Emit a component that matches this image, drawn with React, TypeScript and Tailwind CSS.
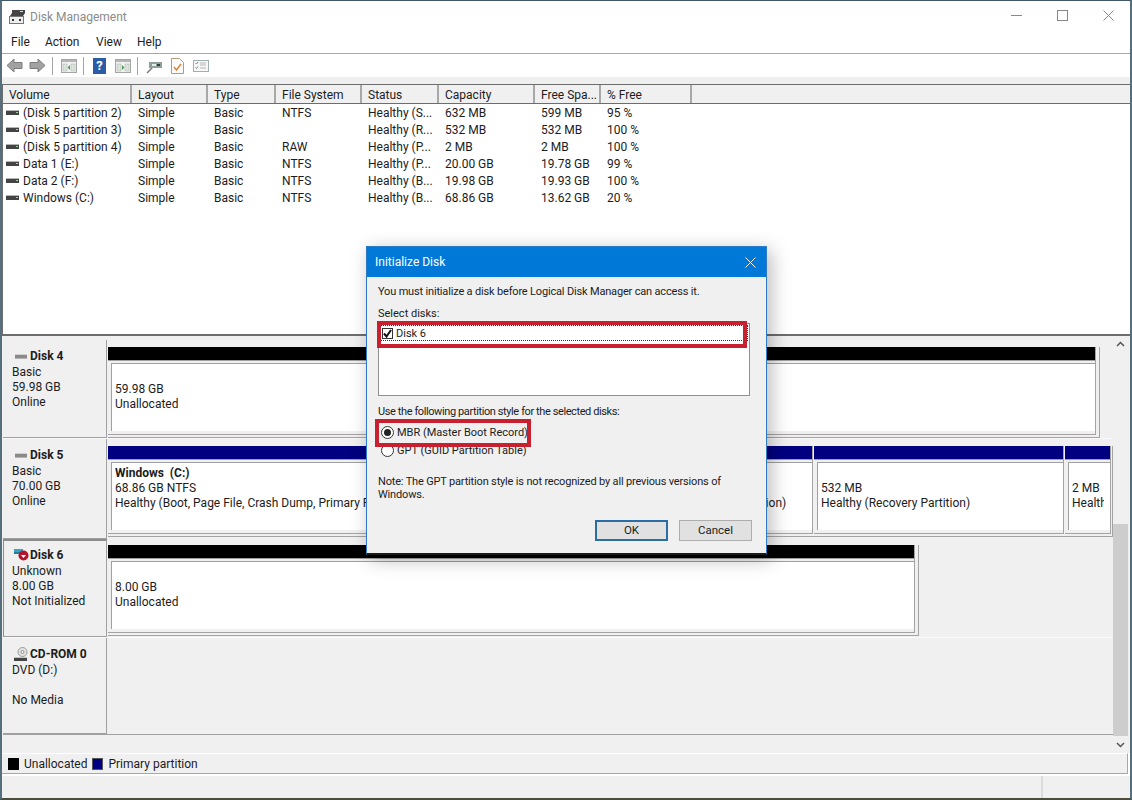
import type { ReactNode } from 'react';

type VolumeRow = {
  name: string;
  fs: string;
  status: string;
  capacity: string;
  free: string;
  pct: string;
};

const columns = [
  { label: 'Volume', width: 'w-[129px]' },
  { label: 'Layout', width: 'w-[76px]' },
  { label: 'Type', width: 'w-[68px]' },
  { label: 'File System', width: 'w-[86px]' },
  { label: 'Status', width: 'w-[77px]' },
  { label: 'Capacity', width: 'w-[96px]' },
  { label: 'Free Spa...', width: 'w-[66px]' },
  { label: '% Free', width: 'w-[91px]' },
];

const volumes: VolumeRow[] = [
  { name: '(Disk 5 partition 2)', fs: 'NTFS', status: 'Healthy (S...', capacity: '632 MB', free: '599 MB', pct: '95 %' },
  { name: '(Disk 5 partition 3)', fs: '', status: 'Healthy (R...', capacity: '532 MB', free: '532 MB', pct: '100 %' },
  { name: '(Disk 5 partition 4)', fs: 'RAW', status: 'Healthy (P...', capacity: '2 MB', free: '2 MB', pct: '100 %' },
  { name: 'Data 1 (E:)', fs: 'NTFS', status: 'Healthy (P...', capacity: '20.00 GB', free: '19.78 GB', pct: '99 %' },
  { name: 'Data 2 (F:)', fs: 'NTFS', status: 'Healthy (B...', capacity: '19.98 GB', free: '19.93 GB', pct: '100 %' },
  { name: 'Windows (C:)', fs: 'NTFS', status: 'Healthy (B...', capacity: '68.86 GB', free: '13.62 GB', pct: '20 %' },
];

function VolumeIcon() {
  return (
    <svg width="13" height="5" viewBox="0 0 13 5" className="shrink-0">
      <rect x="0" y="0" width="13" height="1" fill="#b5b5b5" />
      <rect x="0" y="1" width="13" height="4" fill="#444" />
      <rect x="10" y="2" width="2" height="1" fill="#9fd09f" />
    </svg>
  );
}

function DiskIcon() {
  return (
    <svg width="12" height="5" viewBox="0 0 12 5" className="shrink-0">
      <rect x="0" y="0" width="12" height="1" fill="#d0d0d0" />
      <rect x="0" y="1" width="12" height="3" fill="#8a8a8a" />
      <rect x="0" y="4" width="12" height="1" fill="#b5b5b5" />
    </svg>
  );
}

function UnknownDiskIcon() {
  return (
    <svg width="15" height="12" viewBox="0 0 15 12" className="shrink-0">
      <rect x="0" y="0" width="9" height="3" fill="#35a3c4" />
      <rect x="0" y="3" width="6" height="2" fill="#2a7d96" />
      <circle cx="9.500" cy="6.500" r="5" fill="#b3152c" />
      <path d="M7 6h5L9.500 9z" fill="#fff" />
    </svg>
  );
}

function CdIcon() {
  return (
    <svg width="15" height="15" viewBox="0 0 15 15" className="shrink-0">
      <circle cx="8.500" cy="5" r="4.500" fill="#e4e4e4" stroke="#9a9a9a" />
      <circle cx="8.500" cy="5" r="1.500" fill="#fff" stroke="#8a8a8a" />
      <rect x="0" y="10" width="13" height="1" fill="#c5c5c5" />
      <rect x="0" y="11" width="13" height="3" fill="#444" />
    </svg>
  );
}

function TitleIcon() {
  return (
    <svg width="16" height="14" viewBox="0 0 16 14" className="shrink-0">
      <path d="M3 0h13v3l-2 3H1l2-3z" fill="#444" />
      <rect x="11" y="1" width="3" height="1" fill="#ddd" />
      <rect x="0" y="6" width="15" height="8" fill="#777" />
      <rect x="1" y="7" width="13" height="6" fill="#eee" />
      <rect x="3" y="9" width="2" height="2" fill="#333" />
      <rect x="10" y="9" width="2" height="2" fill="#333" />
    </svg>
  );
}

function ArrowIcon({ flip }: { flip?: boolean }) {
  return (
    <svg width="17" height="15" viewBox="0 0 17 15" className={flip ? 'shrink-0 -scale-x-100' : 'shrink-0'}>
      <path d="M1 7.500 8 1v3.500h8v6H8V14z" fill="#a2a2a2" stroke="#7d7d7d" />
    </svg>
  );
}

function PaneIcon({ right }: { right?: boolean }) {
  return (
    <svg width="16" height="14" viewBox="0 0 16 14" className="shrink-0">
      <rect x="0.5" y="0.5" width="15" height="13" fill="#f4f4f4" stroke="#a5a5a5" />
      <rect x="1" y="1" width="14" height="2" fill="#b5b5b5" />
      <rect x="2" y="5" width="4" height="7" fill="#dbe4dc" stroke="#a8b0a8" strokeWidth="0.5" />
      <rect x="10" y="5" width="4" height="7" fill="#dbe4dc" stroke="#a8b0a8" strokeWidth="0.5" />
      <path d={right ? 'M7 6v5l2.500-2.500z' : 'M9 6v5L6.500 8.500z'} fill="#4f9a5a" />
    </svg>
  );
}

function HelpIcon() {
  return (
    <div className="flex h-[16px] w-[13px] shrink-0 items-center justify-center bg-[#2b5ca8] text-[13px] font-bold leading-none text-white">
      ?
    </div>
  );
}

function ConnectIcon() {
  return (
    <svg width="16" height="16" viewBox="0 0 16 16" className="shrink-0">
      <path d="M1 15 6 10" stroke="#777" strokeWidth="1.500" />
      <rect x="3" y="4" width="13" height="6" fill="#8fa09a" />
      <rect x="6" y="6" width="4" height="2" fill="#e6f0ea" />
      <rect x="11" y="6" width="3" height="2" fill="#2f3f3a" />
    </svg>
  );
}

function TaskIcon() {
  return (
    <svg width="13" height="16" viewBox="0 0 13 16" className="shrink-0">
      <path d="M.5.500h8l4 4v11H.5z" fill="#fbfbfb" stroke="#b59a78" />
      <path d="M3 9l2.500 3L10 6" fill="none" stroke="#d9863a" strokeWidth="1.500" />
    </svg>
  );
}

function ListIcon() {
  return (
    <svg width="16" height="12" viewBox="0 0 16 12" className="shrink-0">
      <rect x="0.5" y="0.5" width="15" height="11" fill="#f7f7f7" stroke="#9fb0b0" />
      <path d="M2.500 3l1 1 1.500-2M2.500 7.500l1 1 1.500-2" fill="none" stroke="#5f8f8f" />
      <path d="M7 3h6M7 5h6M7 8h6" stroke="#b5b5b5" />
    </svg>
  );
}

function Sep() {
  return <div className="h-[18px] w-px shrink-0 bg-[#a5a5a5]" />;
}

function DiskLabel({ icon, title, lines, active }: { icon: ReactNode; title: string; lines: string[]; active?: boolean }) {
  return (
    <div
      className={`flex h-full w-[104px] shrink-0 flex-col border-r border-b border-[#a0a0a0] bg-[#f0f0f0] text-[12px] leading-[15px] text-[#1c1c1c] ${
        active ? 'border-t-2 border-l border-t-[#8c8c8c] border-l-[#8c8c8c] pl-[8px] pt-[7px]' : 'pl-[9px] pt-[9px]'
      }`}
    >
      <div className="flex h-[16px] items-center pb-[2px] font-bold">
        <span className="flex w-[18px] justify-center">{icon}</span>
        {title}
      </div>
      {lines.map((l, i) => (
        <div key={i} className="h-[15px]">{l}</div>
      ))}
    </div>
  );
}

function Partition({ bar, width, children }: { bar: string; width: string; children: ReactNode }) {
  return (
    <div className={`flex h-full shrink-0 flex-col border-r border-b border-[#a3a3a3] ${width}`}>
      <div className={`h-[14px] shrink-0 border-b border-[#a0a0a0] ${bar}`} />
      <div className="mt-[2px] ml-[3px] mb-[3px] flex min-h-0 flex-1 flex-col border-t border-l border-[#a0a0a0] bg-white pl-[3px] pr-[6px] pt-[3px] text-[12px] leading-[15px] text-[#1c1c1c]">
        <div className="overflow-hidden whitespace-nowrap">{children}</div>
      </div>
    </div>
  );
}

function DiskFrame({ width, children }: { width: string; children: ReactNode }) {
  return (
    <div className={`flex h-[91px] gap-[1px] border-r border-b border-[#a3a3a3] pr-[3px] pb-[2px] ${width}`}>
      {children}
    </div>
  );
}

function InitDialog() {
  return (
    <div className="absolute left-[364px] top-[245px] z-10 flex w-[401px] flex-col border border-[#2b7cc4] border-b-[2px] border-b-[#1a1a1a] bg-[#f0f0f0] font-['Roboto',sans-serif] shadow-[4px_4px_18px_rgba(0,0,0,0.28)]">
      <div className="flex h-[30px] items-center justify-between bg-[#0078d7] pl-[8px] pr-[10px] text-[12px] text-white">
        <span>Initialize Disk</span>
        <svg width="11" height="11" viewBox="0 0 11 11">
          <path d="M.5.500l10 10M10.500.500l-10 10" stroke="#fff" strokeWidth="1" />
        </svg>
      </div>
      <div className="relative flex flex-col px-[11px] pt-[7px] pb-[12px] text-[11px] leading-[15px] text-[#1c1c1c]">
        <div className="tracking-[-0.17px]">You must initialize a disk before Logical Disk Manager can access it.</div>
        <div className="mt-[7px]">Select disks:</div>
        <div className="mr-[5px] mt-[2px] h-[73px] border border-[#8f8f8f] bg-white p-[1px]">
          <div className="flex h-[16px] items-center gap-[3px] border border-dotted border-[#333] pl-[1px]">
            <div className="flex h-[11px] w-[11px] items-center justify-center border border-[#333] bg-white">
              <svg width="9" height="9" viewBox="0 0 9 9">
                <path d="M1 4.500 3.500 7.500 8 1" fill="none" stroke="#111" strokeWidth="2" />
              </svg>
            </div>
            <span>Disk 6</span>
          </div>
        </div>
        <div className="mt-[8px] tracking-[-0.4px]">Use the following partition style for the selected disks:</div>
        <div className="mt-[5px] flex h-[17px] items-center gap-[3px] pl-[3px]">
          <div className="flex h-[13px] w-[13px] items-center justify-center rounded-full border border-[#333] bg-white">
            <div className="h-[7px] w-[7px] rounded-full bg-[#222]" />
          </div>
          <span>MBR (Master Boot Record)</span>
        </div>
        <div className="mt-[1px] flex h-[17px] items-center gap-[3px] pl-[3px]">
          <div className="h-[13px] w-[13px] rounded-full border border-[#333] bg-white" />
          <span>GPT (GUID Partition Table)</span>
        </div>
        <div className="mt-[16px] w-[350px] leading-[13px] tracking-[-0.17px]">Note: The GPT partition style is not recognized by all previous versions of Windows.</div>
        <div className="mt-[19px] flex justify-end gap-[11px] pr-[3px]">
          <button className="h-[21px] w-[73px] border-2 border-[#2a6ea5] bg-[#e1e1e1] text-[11.5px] leading-none">OK</button>
          <button className="h-[21px] w-[73px] border border-[#adadad] bg-[#e1e1e1] text-[11.5px] leading-none">Cancel</button>
        </div>
        {/* red annotation boxes sit on top of the form */}
        <div className="absolute left-[10px] top-[44px] h-[27px] w-[370px] border-4 border-[#c8202f]" />
        <div className="absolute left-[8px] top-[142px] h-[28px] w-[156px] border-4 border-[#c8202f]" />
      </div>
    </div>
  );
}

export default function App() {
  return (
    <div className="relative flex h-[800px] w-[1132px] flex-col overflow-hidden border-x-2 border-t border-b-2 border-x-[#566f7c] border-t-[#3f5968] border-b-[#4c4c3c] bg-white font-['Roboto',sans-serif] text-[12px] text-[#1c1c1c]">
      {/* title bar */}
      <div className="flex h-[31px] shrink-0 items-center pl-[7px] text-[#8b8b8b]">
        <TitleIcon />
        <span className="ml-[5px]">Disk Management</span>
        <div className="mb-[2px] ml-auto flex items-center gap-[35px] pr-[16px]">
          <div className="h-px w-[11px] bg-[#888]" />
          <div className="h-[11px] w-[11px] border border-[#888]" />
          <svg width="11" height="11" viewBox="0 0 11 11">
            <path d="M.5.500l10 10M10.500.500l-10 10" stroke="#888" />
          </svg>
        </div>
      </div>
      {/* menu */}
      <div className="flex h-[22px] shrink-0 items-center border-b border-[#a8a8a8] pl-[9px] pb-[2px]">
        <span className="w-[34px]">File</span>
        <span className="w-[51px]">Action</span>
        <span className="w-[41px]">View</span>
        <span>Help</span>
      </div>
      {/* toolbar */}
      <div className="flex h-[23px] shrink-0 items-center pl-[4px]">
        <ArrowIcon />
        <div className="w-[6px]" />
        <ArrowIcon flip />
        <div className="w-[6px]" />
        <Sep />
        <div className="w-[8px]" />
        <PaneIcon />
        <div className="w-[6px]" />
        <Sep />
        <div className="w-[9px]" />
        <HelpIcon />
        <div className="w-[9px]" />
        <PaneIcon right />
        <div className="w-[6px]" />
        <Sep />
        <div className="w-[8px]" />
        <ConnectIcon />
        <div className="w-[9px]" />
        <TaskIcon />
        <div className="w-[9px]" />
        <ListIcon />
      </div>
      <div className="h-[7px] shrink-0 bg-[#efefef]" />
      {/* volume list */}
      <div className="h-[250px] shrink-0 border-l border-[#6d6d6d] bg-white">
        <div className="flex h-[20px] border-y border-[#6d6d6d] bg-[#f0f0f0]">
          {columns.map(c => (
            <div key={c.label} className={`flex h-full shrink-0 items-center whitespace-nowrap border-r-2 border-[#a8a8a8] pl-[6px] pt-[1px] ${c.width}`}>
              {c.label}
            </div>
          ))}
        </div>
        {volumes.map(v => (
          <div key={v.name} className="flex h-[17px] items-center whitespace-nowrap">
            <div className="flex w-[129px] shrink-0 items-center gap-[4px] pl-[3px]">
              <VolumeIcon />
              <span>{v.name}</span>
            </div>
            <div className="w-[76px] shrink-0 pl-[6px]">Simple</div>
            <div className="w-[68px] shrink-0 pl-[6px]">Basic</div>
            <div className="w-[86px] shrink-0 pl-[6px]">{v.fs}</div>
            <div className="w-[77px] shrink-0 overflow-hidden pl-[6px]">{v.status}</div>
            <div className="w-[96px] shrink-0 pl-[6px]">{v.capacity}</div>
            <div className="w-[66px] shrink-0 pl-[6px]">{v.free}</div>
            <div className="w-[91px] shrink-0 pl-[6px]">{v.pct}</div>
          </div>
        ))}
      </div>
      {/* graphical view */}
      <div className="flex h-[419px] shrink-0 border-t-2 border-[#6d6d6d] bg-[#f0f0f0] pl-[1px] pr-[2px]">
        <div className="min-w-0 flex-1 overflow-hidden">
          <div className="flex h-[103px] border-b border-[#fafafa] pt-[4px]">
            <DiskLabel icon={<DiskIcon />} title="Disk 4" lines={['Basic', '59.98 GB', 'Online']} />
            <div className="ml-[1px] pt-[7px]">
              <DiskFrame width="w-[992px]">
                <Partition bar="bg-black" width="w-full">
                  <div className="h-[15px]" />
                  <div>59.98 GB</div>
                  <div>Unallocated</div>
                </Partition>
              </DiskFrame>
            </div>
          </div>
          <div className="flex h-[100px]">
            <DiskLabel icon={<DiskIcon />} title="Disk 5" lines={['Basic', '70.00 GB', 'Online']} />
            <div className="ml-[1px] pt-[7px]">
              <DiskFrame width="w-[1005px]">
                <Partition bar="bg-[#000080]" width="w-[530px]">
                  <div className="font-bold">{'Windows\u00a0 (C:)'}</div>
                  <div>68.86 GB NTFS</div>
                  <div>Healthy (Boot, Page File, Crash Dump, Primary Partition)</div>
                </Partition>
                <Partition bar="bg-[#000080]" width="w-[174px]">
                  <div>&nbsp;</div>
                  <div>632 MB NTFS</div>
                  <div>Healthy (System Partition)</div>
                </Partition>
                <Partition bar="bg-[#000080]" width="w-[250px]">
                  <div>&nbsp;</div>
                  <div>532 MB</div>
                  <div>Healthy (Recovery Partition)</div>
                </Partition>
                <Partition bar="bg-[#000080]" width="w-[46px]">
                  <div>&nbsp;</div>
                  <div>2 MB</div>
                  <div>Healthy (Primary Partition)</div>
                </Partition>
              </DiskFrame>
            </div>
          </div>
          <div className="flex h-[99px] border-b border-[#fafafa]">
            <DiskLabel active icon={<UnknownDiskIcon />} title="Disk 6" lines={['Unknown', '8.00 GB', 'Not Initialized']} />
            <div className="ml-[1px] pt-[6px]">
              <DiskFrame width="w-[811px]">
                <Partition bar="bg-black" width="w-full">
                  <div className="h-[15px]" />
                  <div>8.00 GB</div>
                  <div>Unallocated</div>
                </Partition>
              </DiskFrame>
            </div>
          </div>
          <div className="flex h-[97px] border-b border-[#a0a0a0]">
            <DiskLabel icon={<CdIcon />} title="CD-ROM 0" lines={['DVD (D:)', '\u00a0', 'No Media']} />
          </div>
        </div>
        {/* scrollbar */}
        <div className="flex w-[15px] shrink-0 flex-col items-center bg-[#f0f0f0]">
          <div className="flex h-[17px] w-full items-center justify-center">
            <svg width="9" height="6" viewBox="0 0 9 6"><path d="M1 5l3.500-3.500L8 5" fill="none" stroke="#555" strokeWidth="1.500" /></svg>
          </div>
          <div className="mt-[171px] h-[213px] w-full bg-[#cdcdcd]" />
          <div className="mt-auto flex h-[17px] w-full items-center justify-center">
            <svg width="9" height="6" viewBox="0 0 9 6"><path d="M1 1l3.500 3.500L8 1" fill="none" stroke="#555" strokeWidth="1.500" /></svg>
          </div>
        </div>
      </div>
      {/* legend */}
      <div className="mr-[2px] flex h-[21px] shrink-0 items-center gap-[5px] border-y border-r border-t-white border-r-[#a8a8a8] border-b-[#a8a8a8] bg-[#f0f0f0] pl-[6px]">
        <div className="h-[12px] w-[11px] bg-black" />
        <span>Unallocated</span>
        <div className="h-[12px] w-[11px] border border-[#555] bg-[#000080]" />
        <span>Primary partition</span>
      </div>
      {/* status bar */}
      <div className="flex flex-1 border-t-2 border-white bg-[#f0f0f0]">
        <div className="w-[1041px] border-r-2 border-[#dcdcdc]" />
      </div>
      <InitDialog />
    </div>
  );
}
